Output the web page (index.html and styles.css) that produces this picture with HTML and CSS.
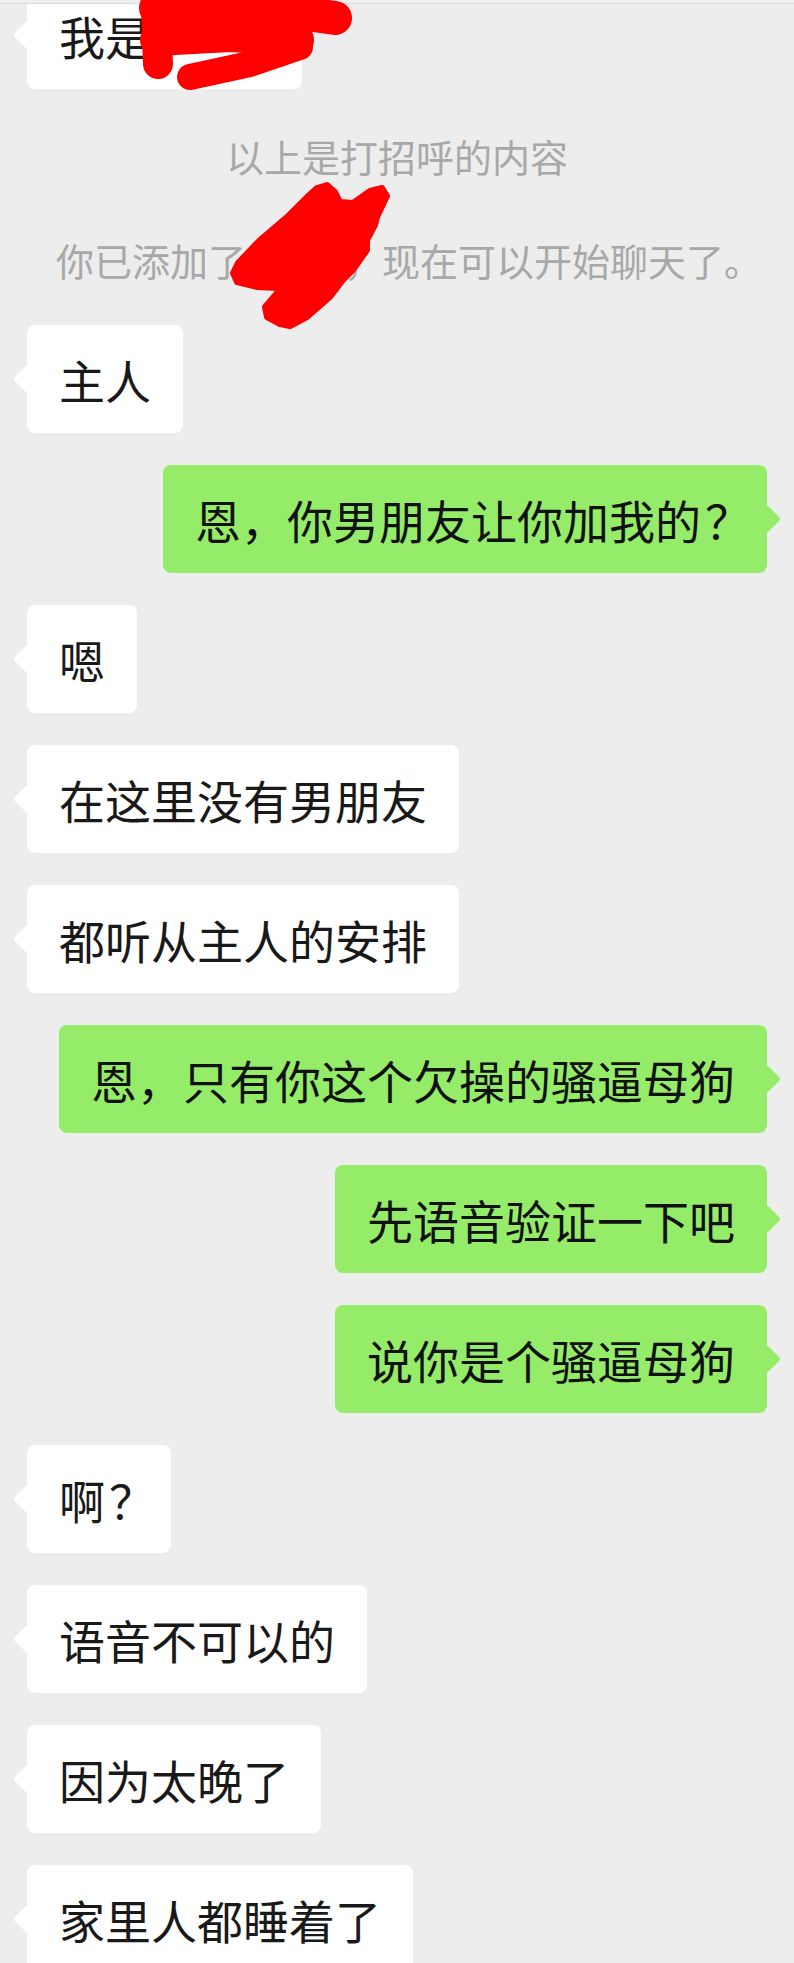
FILE: index.html
```html
<!DOCTYPE html>
<html lang="zh-CN">
<head>
<meta charset="utf-8">
<title>聊天</title>
<link rel="stylesheet" href="styles.css">
</head>
<body>
<div class="topbar"></div>
<div class="chat">
  <div class="row left first"><div class="bubble white">我是<span class="gap-name1"></span></div></div>
  <div class="sys s1">以上是打招呼的内容</div>
  <div class="sys s2">你已添加了<span class="gap-name2"></span>，现在可以开始聊天了。</div>
  <div class="row left"><div class="bubble white">主人</div></div>
  <div class="row right"><div class="bubble green">恩，你男朋友让你加我的<span class="q">？</span></div></div>
  <div class="row left"><div class="bubble white">嗯</div></div>
  <div class="row left"><div class="bubble white">在这里没有男朋友</div></div>
  <div class="row left"><div class="bubble white">都听从主人的安排</div></div>
  <div class="row right"><div class="bubble green">恩，只有你这个欠操的骚逼母狗</div></div>
  <div class="row right"><div class="bubble green">先语音验证一下吧</div></div>
  <div class="row right"><div class="bubble green">说你是个骚逼母狗</div></div>
  <div class="row left"><div class="bubble white">啊<span class="q">？</span></div></div>
  <div class="row left"><div class="bubble white">语音不可以的</div></div>
  <div class="row left"><div class="bubble white">因为太晚了</div></div>
  <div class="row left"><div class="bubble white">家里人都睡着了</div></div>
</div>
<svg class="redactions" width="794" height="340" viewBox="0 0 794 340" aria-hidden="true">
  <g stroke="#fe0000" stroke-linecap="round" stroke-linejoin="round" fill="none">
    <path d="M156 8 L250 6 L335 18" stroke-width="34"/>
    <path d="M156 40 L230 36 L298 40" stroke-width="32"/>
    <path d="M156 10 L158 64" stroke-width="30"/>
    <path d="M170 27 L300 27" stroke-width="14"/>
    <path d="M190 77 L250 64 L300 47" stroke-width="26"/>
  </g>
  <path fill="#fe0000" stroke="#fe0000" stroke-width="6" stroke-linejoin="round"
    d="M317 188 L327 185 L335 192 L340 202 L353 203 L370 191 L382 188 L387 196 L377 217 L375 225 L367 240 L367 250 L353 270 L343 280 L330 297 L307 317 L290 326 L280 324 L267 317 L265 307 L277 293 L278 288 L257 287 L237 282 L233 273 L238 263 L260 240 L287 217 L307 197 Z"/>
</svg>
</body>
</html>
```

FILE: styles.css
```css
html, body {
  margin: 0;
  padding: 0;
}

body {
  width: 794px;
  height: 1963px;
  overflow: hidden;
  background: #ededed;
  font-family: "Noto Sans CJK SC", "Noto Sans", sans-serif;
  color: #191919;
  position: relative;
}

.topbar {
  height: 3px;
  background: #efefef;
  border-bottom: 1px solid #d9d9d9;
}

.chat {
  display: flex;
  flex-direction: column;
  gap: 32px;
  height: 1959px;
  overflow: hidden;
}

.row {
  display: flex;
}

.row.left {
  justify-content: flex-start;
  padding-left: 27px;
}

.row.right {
  justify-content: flex-end;
  padding-right: 27px;
}

.row.first {
  margin-top: -23px;
}

.bubble {
  position: relative;
  padding: 27px 32px;
  font-size: 46px;
  line-height: 54px;
  border-radius: 8px;
  white-space: nowrap;
}

.bubble::before {
  content: "";
  position: absolute;
  top: 50%;
  width: 20px;
  height: 20px;
  margin-top: -10px;
  border-radius: 3px;
  transform: rotate(45deg);
}

.bubble.white {
  background: #ffffff;
}

.bubble.white::before {
  left: -10px;
  background: #ffffff;
}

.bubble.green {
  background: #95ec69;
  color: #111;
}

.bubble.green::before {
  right: -10px;
  background: #95ec69;
}

.q {
  display: inline-block;
  margin-left: 4px;
  margin-right: -16px;
}

.gap-name1 {
  display: inline-block;
  width: 119px;
}

.gap-name2 {
  display: inline-block;
  width: 98px;
}

.sys {
  font-size: 38px;
  line-height: 44px;
  color: #a8a8a8;
  text-align: center;
  white-space: nowrap;
}

.sys.s1 {
  margin-top: 13px;
}

.sys.s2 {
  margin-top: 28px;
  margin-bottom: 11px;
  padding-left: 24px;
}

.redactions {
  position: absolute;
  top: 0;
  left: 0;
  pointer-events: none;
}
```
